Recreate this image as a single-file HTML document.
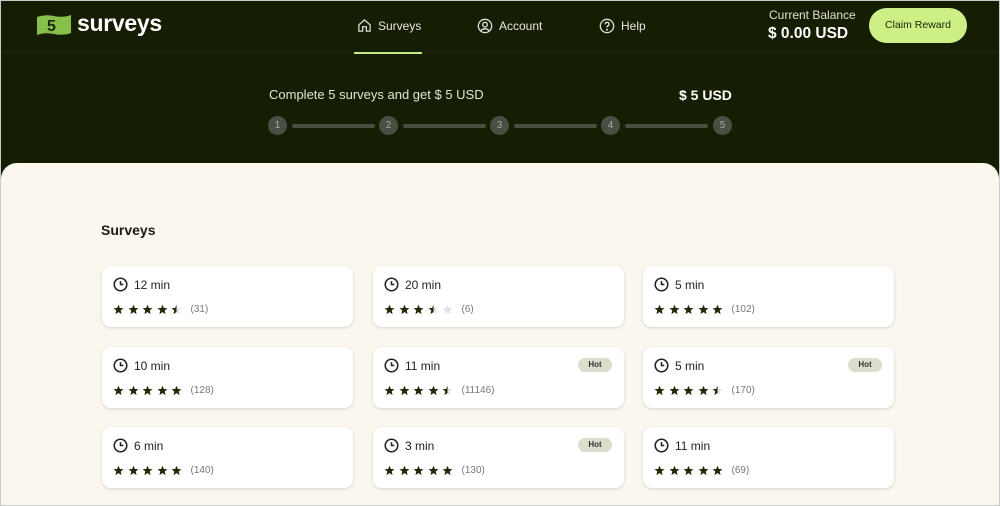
<!DOCTYPE html>
<html><head><meta charset="utf-8"><style>
*{box-sizing:border-box;margin:0;padding:0}
body{width:1000px;height:506px;overflow:hidden;font-family:"Liberation Sans",Arial,sans-serif;background:#c9c9c9}
.frame{position:absolute;left:1px;top:1px;width:998px;height:504px;background:#151d02;overflow:hidden}
.nav{position:absolute;left:0;top:0;width:998px;height:52px;border-bottom:1px solid #1f2a0a}
.logo{position:absolute;left:35px;top:13px}
.logotxt{position:absolute;left:76px;top:9px;color:#fff;font-size:23px;font-weight:bold;letter-spacing:-0.3px}
.ni{position:absolute;top:17px;color:#e8e8e0;font-size:12px;display:flex;align-items:center;gap:6px}
.ul{position:absolute;left:353px;top:51px;width:68px;height:2px;background:#c8ec84}
.bal1{position:absolute;left:768px;top:7px;color:#e0e0d8;font-size:12px}
.bal2{position:absolute;left:767px;top:24px;color:#fff;font-size:15.5px;font-weight:bold}
.btn{position:absolute;left:868px;top:7px;width:98px;height:35px;border-radius:18px;background:#cdef86;color:#1c2408;font-size:10.5px;text-align:center;line-height:35px}
.prog{position:absolute;left:268px;top:86px;color:#e2e4da;font-size:13px}
.prize{position:absolute;left:678px;top:86px;color:#fff;font-size:14px;font-weight:bold}
.dot{position:absolute;top:115px;width:19px;height:19px;border-radius:50%;background:#4a4f44;color:#a8aca0;font-size:10px;text-align:center;line-height:19px}
.bar{position:absolute;top:123px;height:4px;width:83px;border-radius:2px;background:#4a4f44}
.main{position:absolute;left:0;top:162px;width:998px;height:360px;background:#fbf7ef;border-radius:16px 16px 0 0}
h2{position:absolute;left:100px;top:59px;font-size:14px;color:#1a1a1a}
.card{position:absolute;width:251px;height:61px;background:#fff;border-radius:9px;box-shadow:0 1px 3px rgba(0,0,0,.15)}
.t{position:absolute;left:11px;top:11px;font-size:12px;color:#222;display:flex;align-items:center;gap:6px}
.st{position:absolute;left:11px;top:38px;display:flex;align-items:center;gap:3.5px}
.st span{font-size:10px;color:#777;margin-left:5px}
.hot{position:absolute;right:12px;top:11px;width:34px;height:14px;border-radius:7px;background:#dcddcd;font-size:8px;font-weight:bold;color:#333;text-align:center;line-height:14px}
</style></head><body><div class="frame">
<svg width="0" height="0" style="position:absolute"><defs>
<symbol id="s" viewBox="0 0 24 24"><polygon points="12,1.5 15,8.8 22.8,9.3 16.8,14.3 18.7,22 12,17.8 5.3,22 7.2,14.3 1.2,9.3 9,8.8"/></symbol>
<clipPath id="h"><rect x="0" y="0" width="12" height="24"/></clipPath>
</defs></svg>
<div class="nav">
<svg class="logo" width="36" height="22" viewBox="0 0 36 22"><path d="M1 3 Q10 0 18 2 Q27 4 35 1 L35 19 Q27 22 18 20 Q9 18 1 21Z" fill="#86c04a"/><text x="11" y="17" font-family="Liberation Sans" font-weight="bold" font-size="16" fill="#1b2a08">5</text></svg>
<div class="logotxt">surveys</div>
<div class="ni" style="left:356px"><svg width="15" height="15" viewBox="0 0 24 24" fill="none" stroke="#ddd" stroke-width="2"><path d="M3 11 L12 3 L21 11 V21 H15 V14 H9 V21 H3Z"/></svg><span>Surveys</span></div>
<div class="ni" style="left:476px"><svg width="16" height="16" viewBox="0 0 24 24" fill="none" stroke="#ddd" stroke-width="2"><circle cx="12" cy="12" r="10"/><circle cx="12" cy="10" r="3.5"/><path d="M5.5 19 Q12 13 18.5 19"/></svg>Account</div>
<div class="ni" style="left:598px"><svg width="16" height="16" viewBox="0 0 24 24" fill="none" stroke="#ddd" stroke-width="2"><circle cx="12" cy="12" r="10"/><path d="M9.2 9.5 Q9.5 6.5 12 6.5 Q15 6.5 15 9.3 Q15 11.3 12 12.5 V14"/><circle cx="12" cy="17.5" r="0.6" fill="#ddd"/></svg>Help</div>
<div class="ul"></div>
<div class="bal1">Current Balance</div>
<div class="bal2">$ 0.00 USD</div>
<div class="btn">Claim Reward</div>
</div>
<div class="prog">Complete 5 surveys and get $ 5 USD</div>
<div class="prize">$ 5 USD</div>
<div class="dot" style="left:267px">1</div><div class="bar" style="left:291px"></div>
<div class="dot" style="left:378px">2</div><div class="bar" style="left:402px"></div>
<div class="dot" style="left:489px">3</div><div class="bar" style="left:513px"></div>
<div class="dot" style="left:600px">4</div><div class="bar" style="left:624px"></div>
<div class="dot" style="left:712px">5</div>
<div class="main"><h2>Surveys</h2></div>
<div id="cards"></div>
</div>
<script>
var d=[["12 min",4.5,31,0],["20 min",3.5,6,0],["5 min",5,102,0],["10 min",5,128,0],["11 min",4.5,11146,1],["5 min",4.5,170,1],["6 min",5,140,0],["3 min",5,130,1],["11 min",5,69,0]];
var X=[101,372,642],Y=[265,346,426],h="";
var clock='<svg width="15" height="15" viewBox="0 0 24 24" fill="none" stroke="#222" stroke-width="2.5"><circle cx="12" cy="12" r="10"/><path d="M12 6.5V12H16.5"/></svg>';
d.forEach(function(c,i){var s="";for(var k=1;k<=5;k++){if(c[1]>=k)s+='<svg width="11" height="11" fill="#1e2b06"><use href="#s"/></svg>';else if(c[1]>=k-.5)s+='<svg width="11" height="11" viewBox="0 0 24 24"><use href="#s" fill="#e2e2e2"/><g clip-path="url(#h)"><use href="#s" fill="#1e2b06"/></g></svg>';else s+='<svg width="11" height="11" fill="#e2e2e2"><use href="#s"/></svg>';}
h+='<div class="card" style="left:'+X[i%3]+'px;top:'+Y[Math.floor(i/3)]+'px"><div class="t">'+clock+c[0]+'</div><div class="st">'+s+'<span>('+c[2]+')</span></div>'+(c[3]?'<div class="hot">Hot</div>':'')+'</div>';});
document.getElementById("cards").innerHTML=h;
</script>
</body></html>
